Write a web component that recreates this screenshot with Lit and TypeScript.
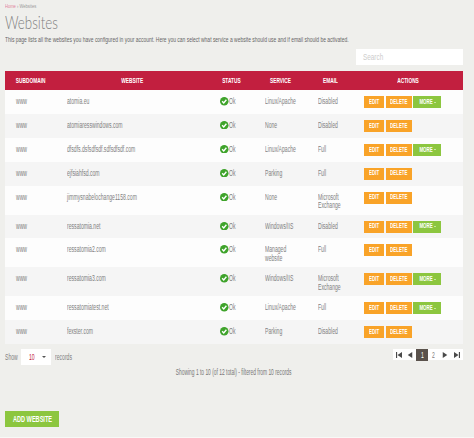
import { LitElement, html, css, svg } from "lit";
import { customElement } from "lit/decorators.js";

type Row = [string, string[], string[], boolean];
const rows: Row[] = [
  ["atomia.eu", ["Linux/Apache"], ["Disabled"], true],
  ["atomiaresswindows.com", ["None"], ["Disabled"], false],
  ["dfsdfs.dsfsdfsdf.sdfsdfsdf.com", ["Linux/Apache"], ["Full"], true],
  ["ejfsiahfsd.com", ["Parking"], ["Full"], false],
  ["jimmysnabelochange1158.com", ["None"], ["Microsoft", "Exchange"], false],
  ["ressatomia.net", ["Windows/IIS"], ["Disabled"], true],
  ["ressatomia2.com", ["Managed", "website"], ["Full"], false],
  ["ressatomia3.com", ["Windows/IIS"], ["Microsoft", "Exchange"], true],
  ["ressatomiatest.net", ["Linux/Apache"], ["Full"], true],
  ["fexster.com", ["Parking"], ["Disabled"], false],
];

const okIcon = svg`<svg class="ok" viewBox="0 0 16 16" width="8.5" height="8.5"><circle cx="8" cy="8" r="8" fill="#3fa32b"/><path d="M4 8.2l3 3 5-6" fill="none" stroke="#fff" stroke-width="2.6"/></svg>`;

const lines = (parts: string[]) => html`<div class="lines">${parts.map((p) => html`<span class="n">${p}</span>`)}</div>`;

@customElement("app-root")
export class AppRoot extends LitElement {
  static styles = css`
    :host {
      display: block;
      width: 474px;
      height: 438px;
      overflow: hidden;
      background: #efefec;
      font-family: "Liberation Sans", sans-serif;
      font-size: 8.5px;
      color: #808080;
      box-sizing: border-box;
      border-bottom: 1.5px solid #f8f8f6;
    }
    .page { display: flex; flex-direction: column; padding: 2px 11px 0 5px; }
    .n { display: inline-block; white-space: nowrap; transform: scaleX(.6); transform-origin: left center; }
    .c { display: inline-block; white-space: nowrap; transform: scaleX(.6); transform-origin: center; }
    .crumb { font-size: 6px; line-height: 7px; margin-top: 1px; color: #999; height: 7px; }
    .crumb .n { transform: scaleX(.68); }
    .crumb b { color: #e2819b; font-weight: 400; }
    h1 { margin: 1px 0 0; height: 22px; font: 300 18px/22px Lato, sans-serif; color: #808080; }
    h1 .n { transform: scaleX(.74); }
    .intro { margin: 2px 0 0; line-height: 10px; font-size: 8px; color: #666; }
    .intro .n { transform: scaleX(.62); }
    .searchrow { display: flex; justify-content: flex-end; margin: 4px 0 6px; }
    .search { width: 107px; height: 16px; box-sizing: border-box; background: #fff; padding-left: 7px; line-height: 16px; color: #ccc; font-size: 8.5px; }
    .search .n { transform: scaleX(.75); }
    table { border-collapse: collapse; table-layout: fixed; width: 458px; }
    th { background: #c21f3f; color: #fff; height: 19px; padding: 0; font-size: 8px; font-weight: 700; text-align: center; }
    td { padding: 0 0 0 11px; height: 23.9px; line-height: 8.5px; vertical-align: top; color: #808080; }
    .cell { padding: 7px 0 5px; }
    .lines { display: flex; flex-direction: column; }
    tbody tr:nth-child(odd) { background: #fdfdfd; }
    tbody tr:nth-child(even) { background: #f5f5f5; }
    .status { display: flex; align-items: center; gap: 0; }
    .ok { flex: none; }
    .acts { display: flex; gap: 1.5px; padding-top: 6px; }
    .btn { height: 12px; color: #fff; font-size: 8px; font-weight: 700; background: #f9a328; display: flex; align-items: center; justify-content: center; }
    .btn .c { transform: scaleX(.55); }
    .edit { width: 20px; }
    .del { width: 26px; }
    .more { width: 28px; background: #8cc63f; }
    .more .c { margin: 0 -4px 0 -5px; }
    .more::after { content: ""; flex: none; border: 1.5px solid transparent; border-top-color: #fff; border-bottom: 0; }
    .tools { display: flex; justify-content: space-between; margin-top: 5px; height: 16px; }
    .len { display: grid; grid-template-columns: 16px 30px auto; align-items: center; }
    .sel { height: 16px; background: #fff; display: flex; align-items: center; justify-content: space-between; box-sizing: border-box; padding: 0 5px 0 8px; color: #c21f3f; }
    .sel .n { transform: scaleX(.6); }
    .sel::after { content: ""; border: 2px solid transparent; border-top-color: #555; border-bottom: 0; }
    .rec { padding-left: 4px; }
    .pager { display: flex; align-items: center; height: 11px; background: #fff; width: 70px; }
    .pager > * { width: 11.67px; flex: none; display: flex; justify-content: center; align-items: center; height: 12px; }
    .pager .cur { background: #5a524c; color: #fff; }
    .pager svg { fill: #4a4a4a; }
    .info { text-align: center; line-height: 10px; margin-top: 1.5px; color: #777; }
    .info .c { transform: scaleX(.575); }
    .add { width: 54px; height: 16px; background: #8cc63f; color: #fff; font-weight: 700; font-size: 9px; display: flex; align-items: center; justify-content: center; margin-top: 34.5px; }
    .add .c { transform: scaleX(.62); }
    col.a { width: 51px; } col.b { width: 153px; } col.d { width: 45px; } col.e { width: 53px; } col.f { width: 46px; } col.g { width: 110px; }
  `;

  private arrow(d: string) {
    return html`<span><svg viewBox="0 0 8 8" width="6" height="6"><path d=${d}/></svg></span>`;
  }

  render() {
    return html`<div class="page">
      <div class="crumb"><span class="n"><b>Home</b> › Websites</span></div>
      <h1><span class="n">Websites</span></h1>
      <p class="intro"><span class="n">This page lists all the websites you have configured in your account. Here you can select what service a website should use and if email should be activated.</span></p>
      <div class="searchrow"><div class="search"><span class="n">Search</span></div></div>
      <table>
        <colgroup><col class="a"><col class="b"><col class="d"><col class="e"><col class="f"><col class="g"></colgroup>
        <thead><tr>${["SUBDOMAIN", "WEBSITE", "STATUS", "SERVICE", "EMAIL", "ACTIONS"].map((h) => html`<th><span class="c">${h}</span></th>`)}</tr></thead>
        <tbody>
          ${rows.map(
            ([site, service, email, more]) => html`<tr>
              <td><div class="cell"><span class="n">www</span></div></td>
              <td><div class="cell"><span class="n">${site}</span></div></td>
              <td><div class="cell status">${okIcon}<span class="n">Ok</span></div></td>
              <td><div class="cell">${lines(service)}</div></td>
              <td><div class="cell">${lines(email)}</div></td>
              <td><div class="acts">
                <div class="btn edit"><span class="c">EDIT</span></div><div class="btn del"><span class="c">DELETE</span></div>
                ${more ? html`<div class="btn more"><span class="c">MORE</span></div>` : ""}
              </div></td>
            </tr>`
          )}
        </tbody>
      </table>
      <div class="tools">
        <div class="len"><span class="n">Show</span><div class="sel"><span class="n">10</span></div><span class="rec"><span class="n">records</span></span></div>
        <div class="pager">
          ${this.arrow("M0 0h1.5v8H0zM8 0v8L2 4z")}
          ${this.arrow("M7 0v8L1 4z")}
          <span class="cur"><span class="c">1</span></span><span><span class="c">2</span></span>
          ${this.arrow("M1 0v8l6-4z")}
          ${this.arrow("M0 0v8l6-4zM6.5 0H8v8H6.5z")}
        </div>
      </div>
      <div class="info"><span class="c">Showing 1 to 10 (of 12 total) - filtered from 10 records</span></div>
      <div class="add"><span class="c">ADD WEBSITE</span></div>
    </div>`;
  }
}
